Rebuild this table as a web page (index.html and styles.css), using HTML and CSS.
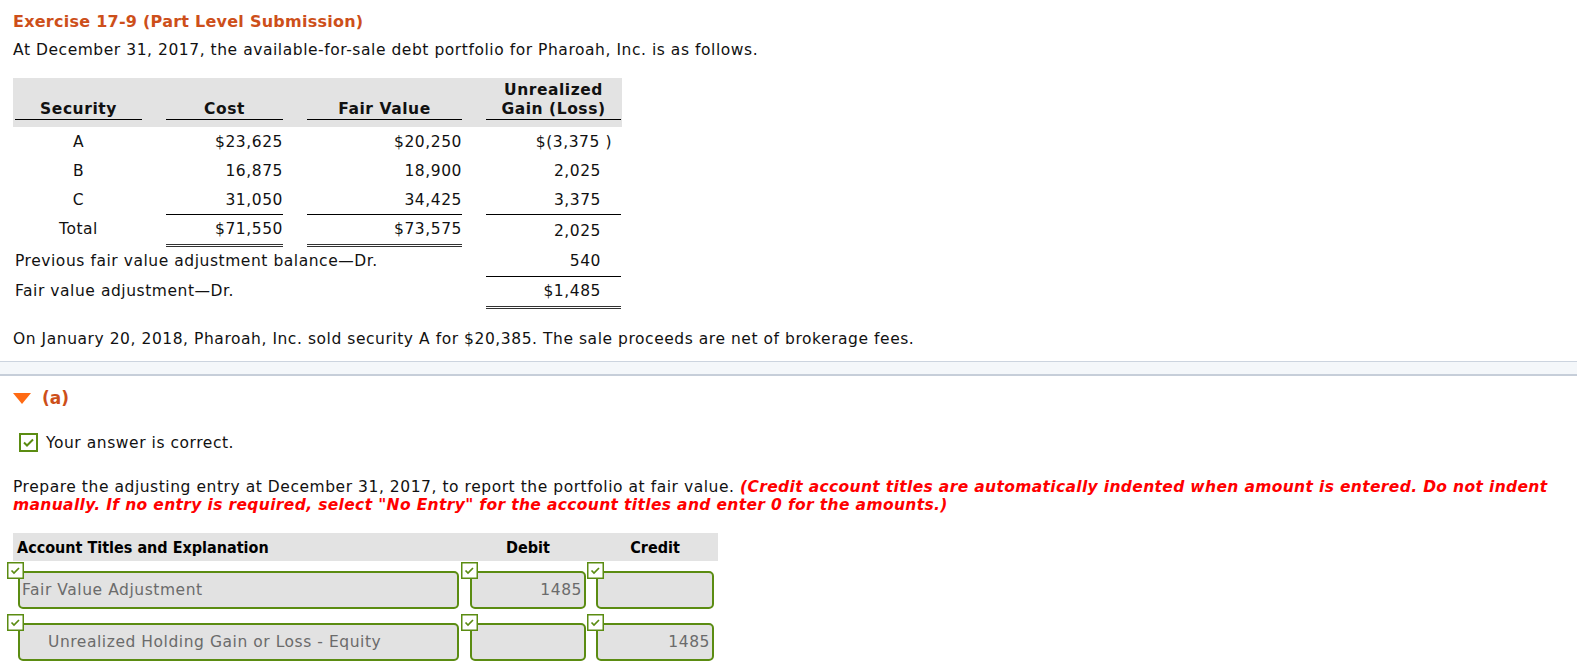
FILE: index.html
```
<!DOCTYPE html>
<html>
<head>
<meta charset="utf-8">
<link rel="stylesheet" href="styles.css">
</head>
<body>
<div class="page">
  <h1 class="title">Exercise 17-9 (Part Level Submission)</h1>
  <p class="intro">At December 31, 2017, the available-for-sale debt portfolio for Pharoah, Inc. is as follows.</p>

  <div class="port">
    <div class="prow phead">
      <div class="pc ul">Security</div>
      <div class="pc ul">Cost</div>
      <div class="pc ul">Fair Value</div>
      <div class="pc ul">Unrealized<br>Gain (Loss)</div>
    </div>
    <div class="prow tall">
      <div class="pc ctr">A</div>
      <div class="pc num">$23,625</div>
      <div class="pc num">$20,250</div>
      <div class="pc num last">$(3,375<span class="paren"> )</span></div>
    </div>
    <div class="prow tall">
      <div class="pc ctr">B</div>
      <div class="pc num">16,875</div>
      <div class="pc num">18,900</div>
      <div class="pc num last">2,025</div>
    </div>
    <div class="prow">
      <div class="pc ctr">C</div>
      <div class="pc num ul">31,050</div>
      <div class="pc num ul">34,425</div>
      <div class="pc num last ul">3,375</div>
    </div>
    <div class="prow tall">
      <div class="pc ctr">Total</div>
      <div class="pc num dbl">$71,550</div>
      <div class="pc num dbl">$73,575</div>
      <div class="pc num last lower">2,025</div>
    </div>
    <div class="prow tall">
      <div class="pc label">Previous fair value adjustment balance—Dr.</div>
      <div class="pc num last ul">540</div>
    </div>
    <div class="prow tall">
      <div class="pc label">Fair value adjustment—Dr.</div>
      <div class="pc num last dbl">$1,485</div>
    </div>
  </div>

  <p class="sale">On January 20, 2018, Pharoah, Inc. sold security A for $20,385. The sale proceeds are net of brokerage fees.</p>
</div>

<div class="divider"></div>

<div class="page">
  <div class="part">
    <svg class="tri" width="18" height="11" viewBox="0 0 18 11"><polygon points="0,0 18,0 9,11" fill="#ff6a13"/></svg>
    <span class="part-label">(a)</span>
  </div>

  <div class="correct">
    <svg class="bigcheck" width="19" height="19" viewBox="0 0 19 19"><rect x="1" y="1" width="17" height="17" fill="#fff" stroke="#5b8c12" stroke-width="2"/><path d="M5 9.5 L8 12.5 L14 6.5" fill="none" stroke="#5b8c12" stroke-width="2"/></svg>
    <span>Your answer is correct.</span>
  </div>

  <p class="prepare">Prepare the adjusting entry at December 31, 2017, to report the portfolio at fair value. <em class="warn">(Credit account titles are automatically indented when amount is entered. Do not indent manually. If no entry is required, select "No Entry" for the account titles and enter 0 for the amounts.)</em></p>

  <div class="journal">
    <div class="jrow jhead">
      <div class="jc acct"><span class="hfield">Account Titles and Explanation</span></div>
      <div class="jc dr"><span class="hfield amt">Debit</span></div>
      <div class="jc cr"><span class="hfield amt">Credit</span></div>
    </div>
    <div class="jrow">
      <div class="jc acct">
        <svg class="tick" width="17" height="17" viewBox="0 0 17 17"><rect x="0.75" y="0.75" width="15.5" height="15.5" fill="#fff" stroke="#5b8c12" stroke-width="1.5"/><path d="M4.5 8.5 L7 11 L12 6" fill="none" stroke="#5b8c12" stroke-width="1.7"/></svg>
        <div class="field">Fair Value Adjustment</div>
      </div>
      <div class="jc dr">
        <svg class="tick" width="17" height="17" viewBox="0 0 17 17"><rect x="0.75" y="0.75" width="15.5" height="15.5" fill="#fff" stroke="#5b8c12" stroke-width="1.5"/><path d="M4.5 8.5 L7 11 L12 6" fill="none" stroke="#5b8c12" stroke-width="1.7"/></svg>
        <div class="field num">1485</div>
      </div>
      <div class="jc cr">
        <svg class="tick" width="17" height="17" viewBox="0 0 17 17"><rect x="0.75" y="0.75" width="15.5" height="15.5" fill="#fff" stroke="#5b8c12" stroke-width="1.5"/><path d="M4.5 8.5 L7 11 L12 6" fill="none" stroke="#5b8c12" stroke-width="1.7"/></svg>
        <div class="field num"></div>
      </div>
    </div>
    <div class="jrow">
      <div class="jc acct">
        <svg class="tick" width="17" height="17" viewBox="0 0 17 17"><rect x="0.75" y="0.75" width="15.5" height="15.5" fill="#fff" stroke="#5b8c12" stroke-width="1.5"/><path d="M4.5 8.5 L7 11 L12 6" fill="none" stroke="#5b8c12" stroke-width="1.7"/></svg>
        <div class="field indent">Unrealized Holding Gain or Loss - Equity</div>
      </div>
      <div class="jc dr">
        <svg class="tick" width="17" height="17" viewBox="0 0 17 17"><rect x="0.75" y="0.75" width="15.5" height="15.5" fill="#fff" stroke="#5b8c12" stroke-width="1.5"/><path d="M4.5 8.5 L7 11 L12 6" fill="none" stroke="#5b8c12" stroke-width="1.7"/></svg>
        <div class="field num"></div>
      </div>
      <div class="jc cr">
        <svg class="tick" width="17" height="17" viewBox="0 0 17 17"><rect x="0.75" y="0.75" width="15.5" height="15.5" fill="#fff" stroke="#5b8c12" stroke-width="1.5"/><path d="M4.5 8.5 L7 11 L12 6" fill="none" stroke="#5b8c12" stroke-width="1.7"/></svg>
        <div class="field num">1485</div>
      </div>
    </div>
  </div>
</div>
</body>
</html>
```
FILE: styles.css
```
* { box-sizing: border-box; }
html, body { margin: 0; padding: 0; background: #fff; }
body {
  font-family: "DejaVu Sans", Verdana, sans-serif;
  font-size: 15.5px;
  letter-spacing: 0.55px;
  color: #111;
}
.page { padding: 0 13px; }

.title {
  margin: 0;
  padding-top: 12px;
  font-size: 16px;
  letter-spacing: 0.25px;
  line-height: 20px;
  font-weight: bold;
  color: #cd4f1a;
}
.intro {
  margin: 9px 0 0;
  line-height: 18px;
}

/* portfolio table */
.port { margin-top: 19px; width: 609px; }
.prow {
  display: grid;
  grid-template-columns: 127px 117px 155px 135px;
  column-gap: 24px;
  padding: 0 1px 0 2px;
  line-height: 28px;
}
.prow.tall { line-height: 29px; }
.phead {
  background: #e3e3e3;
  padding-top: 3px;
  padding-bottom: 7px;
  align-items: end;
  font-weight: bold;
  line-height: 19px;
}
.prow.phead + .prow { padding-top: 1px; }
.pc { white-space: nowrap; }
.phead .pc { text-align: center; }
.ul { border-bottom: 1px solid #000; }
.dbl { border-bottom: 3px double #333; }
.ctr { text-align: center; }
.num { text-align: right; }
.num.last { padding-right: 20px; }
.paren { margin-right: -11px; }
.lower { padding-top: 2px; }
.label { grid-column: 1 / 4; }
.prow .num.last:last-child { grid-column: 4; }

.sale { margin: 21px 0 0; line-height: 18px; }

.divider {
  margin-top: 13px;
  height: 15px;
  border-top: 1px solid #ccd4df;
  border-bottom: 2px solid #c6ced9;
  background: #f4f7fa;
}

.part {
  display: flex;
  align-items: center;
  gap: 11px;
  margin-top: 12px;
  height: 20px;
}
.part-label {
  font-size: 17px;
  letter-spacing: 0;
  font-weight: bold;
  color: #cd4f1a;
}

.correct {
  display: flex;
  align-items: center;
  gap: 8px;
  margin-top: 25px;
  margin-left: 6px;
  height: 19px;
}

.prepare {
  margin: 26px 0 0;
  line-height: 18px;
  max-width: 1555px;
}
.warn {
  color: #ff0000;
  font-weight: bold;
  font-style: italic;
  letter-spacing: 0.35px;
}

/* journal */
.journal { margin-top: 19px; width: 705px; }
.jrow {
  display: grid;
  grid-template-columns: 446px 128px 131px;
  margin-bottom: 4px;
}
.jhead {
  background: #e3e3e3;
  height: 28px;
  align-items: center;
  margin-bottom: 0;
  font-family: "DejaVu Sans Condensed", "DejaVu Sans", sans-serif;
  font-weight: bold;
  font-size: 16px;
  letter-spacing: 0;
  color: #000;
}
.jc { position: relative; padding-top: 10px; }
.jhead .jc { padding-top: 0; }
.hfield { display: block; padding-left: 4px; }
.hfield.amt { text-align: center; padding-left: 0; }
.jc.dr .hfield { margin-left: 11px; width: 116px; }
.jc.cr .hfield { margin-left: 9px; width: 118px; }

.tick { position: absolute; top: 1px; }
.jc.acct .tick { left: -6px; }
.jc.dr .tick { left: 2px; }
.jc.cr .tick { left: 0; }

.field {
  height: 38px;
  border: 2px solid #5b8c12;
  border-radius: 5px;
  background: #e2e2e2;
  color: #6b6b6b;
  line-height: 34px;
  padding: 0 2px;
  white-space: nowrap;
}
.jc.acct .field { margin-left: 5px; width: 441px; }
.jc.dr .field { margin-left: 11px; width: 116px; }
.jc.cr .field { margin-left: 9px; width: 118px; }
.field.num { text-align: right; }
.field.indent { padding-left: 28px; }
```
